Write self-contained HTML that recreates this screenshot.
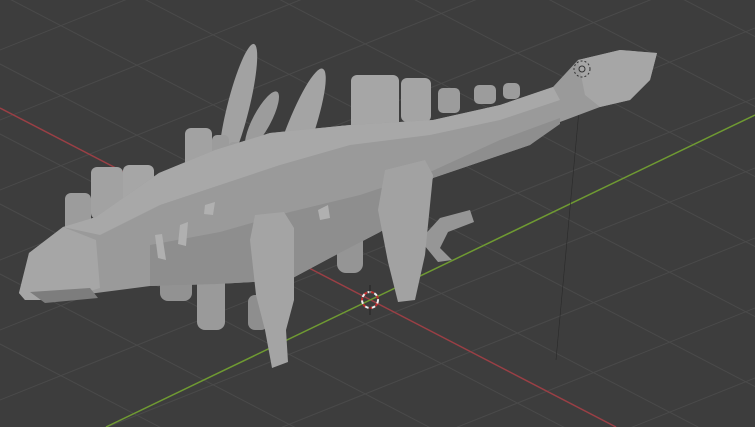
<!DOCTYPE html>
<html><head><style>
html,body{margin:0;padding:0;background:#3d3d3d;width:755px;height:427px;overflow:hidden;position:relative}
svg{display:block;position:absolute;left:0;top:0}
</style></head><body>
<svg width="755" height="427" viewBox="0 0 755 427" xmlns="http://www.w3.org/2000/svg" overflow="hidden">
<rect width="755" height="427" fill="#3d3d3d"/>
<g stroke="#4a4a4a" stroke-width="1">
<line x1="-200" y1="-40" x2="900" y2="532"/>
<line x1="-200" y1="-110" x2="900" y2="462"/>
<line x1="-200" y1="-180" x2="900" y2="392"/>
<line x1="-200" y1="-250" x2="900" y2="322"/>
<line x1="-200" y1="-320" x2="900" y2="252"/>
<line x1="-200" y1="-390" x2="900" y2="182"/>
<line x1="-200" y1="-460" x2="900" y2="112"/>
<line x1="-200" y1="-530" x2="900" y2="42"/>
<line x1="-200" y1="-600" x2="900" y2="-28"/>
<line x1="-200" y1="30" x2="900" y2="602"/>
<line x1="-200" y1="100" x2="900" y2="672"/>
<line x1="-200" y1="170" x2="900" y2="742"/>
<line x1="-200" y1="240" x2="900" y2="812"/>
<line x1="-100" y1="510" x2="900" y2="110"/>
<line x1="-100" y1="440" x2="900" y2="40"/>
<line x1="-100" y1="370" x2="900" y2="-30"/>
<line x1="-100" y1="300" x2="900" y2="-100"/>
<line x1="-100" y1="230" x2="900" y2="-170"/>
<line x1="-100" y1="160" x2="900" y2="-240"/>
<line x1="-100" y1="90" x2="900" y2="-310"/>
<line x1="-100" y1="580" x2="900" y2="180"/>
<line x1="-100" y1="650" x2="900" y2="250"/>
<line x1="-100" y1="720" x2="900" y2="320"/>
<line x1="-100" y1="790" x2="900" y2="390"/>
<line x1="-100" y1="860" x2="900" y2="460"/>
<line x1="-100" y1="930" x2="900" y2="530"/>
</g>
<line x1="0" y1="108" x2="616" y2="427" stroke="#9a3f45" stroke-width="1.5"/>
<line x1="106" y1="427" x2="755" y2="115" stroke="#6f9a32" stroke-width="1.5"/>
<line x1="582" y1="78" x2="556" y2="360" stroke="#2a2a2a" stroke-width="0.6"/>
<g fill="#9c9c9c">
<ellipse cx="238" cy="108" rx="11" ry="66" transform="rotate(14 238 108)" fill="#a2a2a2"/>
<ellipse cx="262" cy="120" rx="9" ry="32" transform="rotate(28 262 120)"/>
<ellipse cx="296" cy="142" rx="14" ry="78" transform="rotate(20 296 142)" fill="#a4a4a4"/>
<ellipse cx="320" cy="170" rx="9" ry="50" transform="rotate(28 320 170)"/>
<rect x="351" y="75" width="48" height="57" rx="6" fill="#a6a6a6"/>
<rect x="401" y="78" width="30" height="44" rx="6" fill="#a4a4a4"/>
<rect x="438" y="88" width="22" height="25" rx="5"/>
<rect x="474" y="85" width="22" height="19" rx="5"/>
<rect x="503" y="83" width="17" height="16" rx="5"/>
<rect x="185" y="128" width="27" height="48" rx="6" fill="#a2a2a2"/>
<rect x="212" y="135" width="17" height="34" rx="5"/>
<rect x="229" y="142" width="12" height="18" rx="4"/>
<rect x="91" y="167" width="32" height="52" rx="6" fill="#a2a2a2"/>
<rect x="123" y="165" width="31" height="48" rx="6" fill="#a6a6a6"/>
<rect x="154" y="177" width="17" height="25" rx="5"/>
<rect x="65" y="193" width="26" height="42" rx="6"/>
<rect x="337" y="228" width="26" height="45" rx="9" fill="#959595"/>
<path d="M420 240 L440 218 L470 210 L474 222 L448 232 L440 248 L452 260 L438 262 Z" fill="#969696"/>
<rect x="197" y="262" width="28" height="68" rx="8" fill="#9a9a9a"/>
<rect x="160" y="265" width="32" height="36" rx="8" fill="#929292"/>
<rect x="248" y="295" width="20" height="35" rx="7" fill="#8e8e8e"/>
<path d="M19 293 L29 253 L63 227 L96 217 L159 173 L215 150 L270 133 L350 125 L433 120 L500 105 L553 87 L578 60 L620 50 L657 53 L650 80 L630 100 L600 107 L560 122 L530 145 L480 162 L433 178 L420 205 L380 232 L330 258 L289 280 L217 284 L150 286 L96 293 L50 300 L25 300 Z" fill="#9a9a9a"/>
<path d="M150 245 L220 232 L290 212 L360 195 L430 172 L500 140 L560 118 L560 124 L530 145 L480 162 L433 178 L420 205 L380 232 L330 258 L289 280 L217 284 L150 286 Z" fill="#8e8e8e"/>
<path d="M63 227 L96 217 L159 173 L215 150 L270 133 L350 125 L433 120 L500 105 L553 87 L560 100 L500 120 L430 135 L350 145 L280 165 L220 185 L160 205 L100 235 Z" fill="#a8a8a8"/>
<path d="M19 293 L29 253 L63 227 L96 240 L100 288 L60 300 L25 300 Z" fill="#a6a6a6"/>
<path d="M30 292 L90 288 L98 298 L45 303 Z" fill="#7d7d7d"/>
<path d="M578 60 L620 50 L657 53 L650 80 L630 100 L600 107 L585 95 Z" fill="#a6a6a6"/>
<path d="M205 205 L215 202 L213 215 L204 214Z" fill="#b0b0b0"/>
<path d="M180 225 L188 222 L186 246 L178 244Z" fill="#b0b0b0"/>
<path d="M155 235 L162 234 L166 260 L158 258Z" fill="#b0b0b0"/>
<path d="M318 210 L328 205 L330 218 L320 220Z" fill="#b0b0b0"/>
<path d="M385 170 L425 160 L433 175 L425 255 L415 300 L398 302 L388 262 L378 210 Z" fill="#a2a2a2"/>
<path d="M255 215 L284 212 L294 228 L294 300 L286 330 L288 362 L272 368 L265 330 L256 295 L250 240 Z" fill="#a4a4a4"/>
</g>
<circle cx="370" cy="300" r="8" fill="none" stroke="#eeeeee" stroke-width="2" stroke-dasharray="4 3"/>
<circle cx="370" cy="300" r="8" fill="none" stroke="#c03030" stroke-width="2" stroke-dasharray="3 4" stroke-dashoffset="3.5"/>
<line x1="370" y1="285" x2="370" y2="293" stroke="#222" stroke-width="1"/>
<line x1="370" y1="307" x2="370" y2="315" stroke="#222" stroke-width="1"/>
<circle cx="582" cy="69" r="8" fill="none" stroke="#333" stroke-width="1" stroke-dasharray="2 2"/>
<circle cx="582" cy="69" r="3" fill="none" stroke="#333" stroke-width="1"/>
</svg>
</body></html>
